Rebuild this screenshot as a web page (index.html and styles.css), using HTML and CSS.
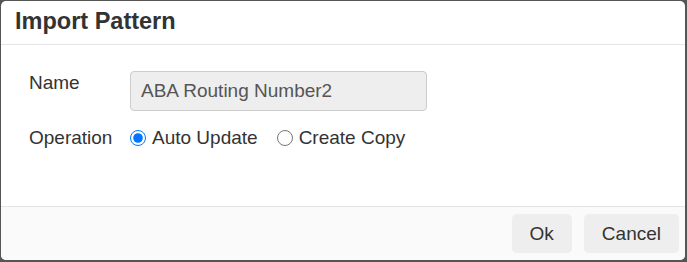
FILE: index.html
```html
<!DOCTYPE html>
<html lang="en">
<head>
<meta charset="UTF-8">
<title>Import Pattern</title>
<link rel="stylesheet" href="styles.css">
</head>
<body>
    <div class="dialog">
        <div class="dialog-header">Import Pattern</div>
        <div class="dialog-body">
            <div class="row">
                <label class="label">Name</label>
                <input type="text" class="name-input" value="ABA Routing Number2" readonly>
            </div>
            <div class="row row-op">
                <span class="label">Operation</span>
                <label class="radio"><input type="radio" name="op" checked> Auto Update</label>
                <label class="radio"><input type="radio" name="op"> Create Copy</label>
            </div>
        </div>
        <div class="dialog-footer">
            <button class="btn">Ok</button>
            <button class="btn">Cancel</button>
        </div>
    </div>
</body>
</html>
```

FILE: styles.css
```css
html, body {
    margin: 0;
    height: 100%;
}
body {
    background-color: #555;
    font-family: "Liberation Sans", Arial, sans-serif;
    color: #333;
}
.dialog {
    box-sizing: border-box;
    margin: 1px 2px 0 1px;
    height: 259px;
    background-color: #fff;
    border-radius: 5px;
    display: flex;
    flex-direction: column;
    overflow: hidden;
}
.dialog-header {
    height: 44px;
    border-bottom: 1px solid #e5e5e5;
    padding: 7px 0 0 14px;
    box-sizing: border-box;
    font-size: 23.5px;
    font-weight: bold;
}
.dialog-body {
    flex: 1;
    padding: 26px 0 0 28px;
}
.row {
    display: flex;
    align-items: flex-start;
}
.label {
    width: 101px;
    font-size: 19px;
    padding-top: 1px;
}
.name-input {
    box-sizing: border-box;
    width: 297px;
    height: 40px;
    padding: 0 10px;
    font-family: inherit;
    font-size: 19px;
    color: #555;
    background-color: #eee;
    border: 1px solid #ccc;
    border-radius: 4px;
    outline: none;
}
.row-op {
    margin-top: 16px;
    align-items: center;
}
.row-op .label {
    padding-top: 0;
}
.radio {
    font-size: 19px;
    margin-right: 19px;
    display: flex;
    align-items: center;
}
.radio input {
    margin: 0 6px 0 0;
    width: 16px;
    height: 16px;
}
.dialog-footer {
    height: 54px;
    border-top: 1px solid #e5e5e5;
    background-color: #fafafa;
    display: flex;
    justify-content: flex-end;
    align-items: flex-start;
    padding: 7px 6px 0 0;
    box-sizing: border-box;
}
.btn {
    height: 39px;
    padding: 0 18px;
    margin-left: 12px;
    font-family: inherit;
    font-size: 19px;
    color: #333;
    background-color: #eee;
    border: none;
    border-radius: 5px;
}
```
